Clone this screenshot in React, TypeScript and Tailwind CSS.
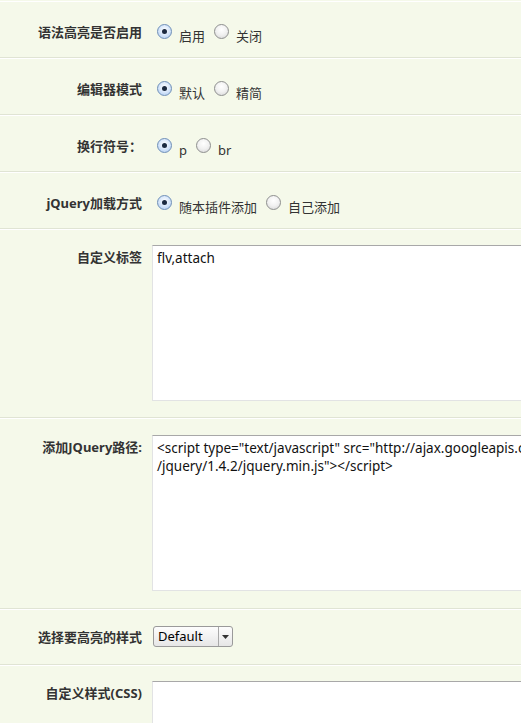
import type { ReactNode } from "react";

const font = { fontFamily: '"Microsoft YaHei", "Noto Sans", "Noto Sans CJK SC", sans-serif' };

function Radio({ checked }: { checked?: boolean }) {
  return checked ? (
    <span className="mt-[2px] ml-[5px] mr-[7px] flex h-[15px] w-[15px] shrink-0 items-center justify-center rounded-full border border-[#6f8fb8] bg-[radial-gradient(circle_at_50%_40%,#ffffff_0%,#dbe9fb_45%,#a9c8ef_100%)]">
      <span className="h-[5px] w-[5px] rounded-full bg-[#1b2a40]" />
    </span>
  ) : (
    <span className="mt-[2px] ml-[5px] mr-[7px] h-[15px] w-[15px] shrink-0 rounded-full border border-[#8e8f8f] bg-[radial-gradient(circle_at_50%_35%,#ffffff_0%,#f1f1f1_50%,#d4d4d4_100%)]" />
  );
}

function RadioRow({ label, options }: { label: string; options: string[] }) {
  return (
    <div className="flex h-[57px] border-t border-b border-t-white border-b-[#e0e4d4] pt-[20px]">
      <div className="w-[142px] shrink-0 text-right text-[13px] font-bold leading-[20px] text-[#333]">{label}</div>
      <div className="ml-[10px] flex items-start">
        {options.map((o, i) => (
          <label key={o} className="flex items-start">
            <Radio checked={i === 0} />
            <span className="mt-[4px] mr-[4px] text-[13px] leading-[20px] text-[#333]">{o}</span>
          </label>
        ))}
      </div>
    </div>
  );
}

function Field({ label, children, pad }: { label: string; children: ReactNode; pad: string }) {
  return (
    <div className={`flex border-t border-b border-t-white border-b-[#e0e4d4] ${pad}`}>
      <div className="w-[142px] shrink-0 pt-[2px] text-right text-[13px] font-bold leading-[20px] text-[#333]">{label}</div>
      <div className="ml-[10px]">{children}</div>
    </div>
  );
}

function Area({ lines }: { lines: string[] }) {
  return (
    <div className="h-[156px] w-[520px] border border-[#e2e3e4] border-t-[#a8a8a8] bg-white px-[4px] pt-[3px] text-[13.5px] leading-[18px] whitespace-nowrap text-[#111]">
      {lines.map((l) => (
        <div key={l}>{l}</div>
      ))}
    </div>
  );
}

export default function App() {
  return (
    <div className="h-[723px] w-full overflow-hidden bg-[#f5f9ea] pt-[1px]" style={font}>
      <RadioRow label="语法高亮是否启用" options={["启用", "关闭"]} />
      <RadioRow label="编辑器模式" options={["默认", "精简"]} />
      <RadioRow label="换行符号：" options={["p", "br"]} />
      <RadioRow label="jQuery加载方式" options={["随本插件添加", "自己添加"]} />

      <Field label="自定义标签" pad="pt-[15px] pb-[16px]">
        <Area lines={["flv,attach"]} />
      </Field>

      <Field label="添加JQuery路径:" pad="pt-[16px] pb-[17px]">
        <Area
          lines={[
            '<script type="text/javascript" src="http://ajax.googleapis.com/ajax/libs',
            '/jquery/1.4.2/jquery.min.js"></script>',
          ]}
        />
      </Field>

      <div className="flex h-[56px] border-t border-b border-t-white border-b-[#e0e4d4] pt-[16px]">
        <div className="w-[142px] shrink-0 pt-[1px] text-right text-[13px] font-bold leading-[20px] text-[#333]">选择要高亮的样式</div>
        <div className="ml-[11px]">
          <div className="flex h-[21px] w-[80px] items-stretch rounded-[3px] border border-[#9a9a9a] bg-[linear-gradient(#fdfdfd,#e6e6e6)]">
            <span className="flex-1 pl-[4px] text-[13px] leading-[19px] text-black">Default</span>
            <span className="flex w-[14px] items-center justify-center border-l border-[#a8a8a8]">
              <svg width="7" height="4" viewBox="0 0 7 4">
                <path d="M0 0h7L3.5 4z" fill="#333" />
              </svg>
            </span>
          </div>
        </div>
      </div>

      <div className="flex border-t border-t-white pt-[15px]">
        <div className="w-[142px] shrink-0 pt-[2px] text-right text-[13px] font-bold leading-[20px] text-[#333]">自定义样式(CSS)</div>
        <div className="ml-[10px]">
          <Area lines={[""]} />
        </div>
      </div>
    </div>
  );
}
